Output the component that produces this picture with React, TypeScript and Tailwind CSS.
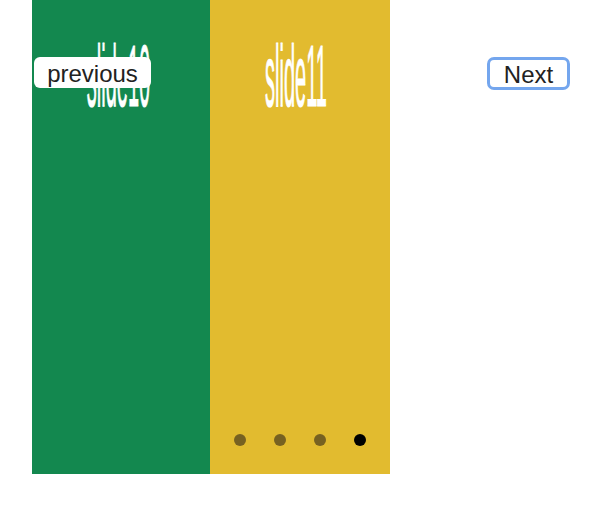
import React from "react";

export default function App() {
  const dots = [false, false, false, true];
  return (
    <div
      className="relative h-[508px] w-[608px] overflow-hidden bg-white"
      style={{ fontFamily: '"Liberation Sans", Arial, sans-serif' }}
    >
      <div className="ml-8 flex h-[474px] w-[358px]">
        <div className="flex w-[178px] flex-col bg-[#13884f]">
          <div className="flex justify-center pr-[5px] pt-[31px]">
            <span className="inline-block origin-top scale-y-[4.4] text-[20px] leading-none text-white [-webkit-text-stroke:0.25px_white]">
              slide10
            </span>
          </div>
        </div>
        <div className="flex w-[180px] flex-col bg-[#e2bb2f]">
          <div className="flex justify-center pr-[8px] pt-[31px]">
            <span className="inline-block origin-top scale-y-[4.4] text-[20px] leading-none text-white [-webkit-text-stroke:0.25px_white]">
              slide11
            </span>
          </div>
          <div className="mt-auto mb-[28px] flex justify-center gap-[28px]">
            {dots.map((a, i) => (
              <span
                key={i}
                className={
                  a
                    ? "h-3 w-3 rounded-full bg-black"
                    : "h-3 w-3 rounded-full bg-[#776121]"
                }
              />
            ))}
          </div>
        </div>
      </div>
      <button className="absolute left-[34px] top-[57px] flex h-[31px] w-[117px] items-center justify-center rounded-[6px] bg-white pt-[3px] text-[24px] leading-none text-[#222]">
        previous
      </button>
      <button className="absolute left-[487px] top-[57px] flex h-[33px] w-[83px] items-center justify-center rounded-[7px] border-[3px] border-[#74a6ee] bg-white pt-[2px] text-[24px] leading-none text-[#222]">
        Next
      </button>
    </div>
  );
}
